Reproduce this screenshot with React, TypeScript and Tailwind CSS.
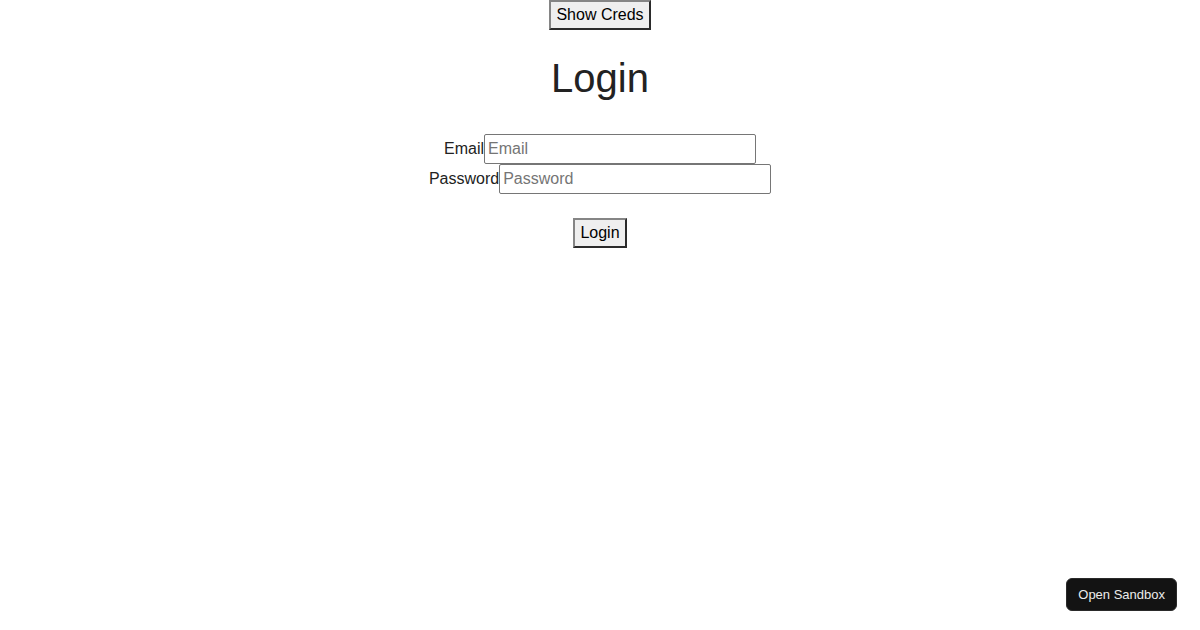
export default function App() {
    return (
        <div className="min-h-[630px] bg-white text-[#222222] font-['Liberation_Sans',Arial,sans-serif] text-base">
            <div className="flex flex-col items-center">
                <button className="h-[30px] px-[5px] bg-[#efefef] text-black border-2 border-t-[#858585] border-l-[#858585] border-b-[#2b2b2b] border-r-[#2b2b2b] leading-[18px]">
                    Show Creds
                </button>
                <h1 className="mt-[25px] text-[40px] leading-[46px] font-normal">Login</h1>
                <form className="mt-[33px] flex flex-col items-center" onSubmit={(e) => e.preventDefault()}>
                    <div className="flex items-center justify-center">
                        <label htmlFor="email">Email</label>
                        <input
                            id="email"
                            type="email"
                            placeholder="Email"
                            className="w-[272px] h-[30px] px-[3px] border border-[#767676] rounded-[2px] placeholder:text-[#757575] text-black"
                        />
                    </div>
                    <div className="flex items-center justify-center">
                        <label htmlFor="password">Password</label>
                        <input
                            id="password"
                            type="password"
                            placeholder="Password"
                            className="w-[272px] h-[30px] px-[3px] border border-[#767676] rounded-[2px] placeholder:text-[#757575] text-black"
                        />
                    </div>
                    <button
                        type="submit"
                        className="mt-[24px] h-[30px] px-[5px] bg-[#efefef] text-black border-2 border-t-[#858585] border-l-[#858585] border-b-[#2b2b2b] border-r-[#2b2b2b] leading-[18px]"
                    >
                        Login
                    </button>
                </form>
            </div>
            <button className="fixed right-[23px] bottom-[19px] h-[33px] px-[11px] rounded-md bg-[#131313] border border-[#2a2a2a] text-[#ececec] text-[13px]">
                Open Sandbox
            </button>
        </div>
    );
}
